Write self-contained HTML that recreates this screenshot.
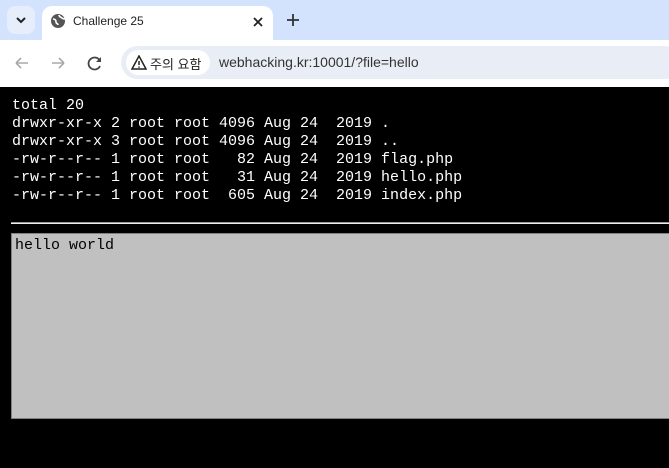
<!DOCTYPE html><html><head><style>
body{margin:0;width:669px;height:468px;overflow:hidden;font-family:"Liberation Sans","Noto Sans CJK KR",sans-serif;background:#000;position:relative}
.tabbar{position:absolute;left:0;top:0;width:669px;height:40px;background:#d3e3fd}
.dd{position:absolute;left:7px;top:6px;width:28px;height:28px;background:#e6eefc;border-radius:8px}
.tab{position:absolute;left:42px;top:6px;width:231px;height:34px;background:#fff;border-radius:10px 10px 0 0}
.tb{position:absolute;left:0;top:40px;width:669px;height:47px;background:#fff}
.addr{position:absolute;left:121px;top:46px;width:560px;height:33px;background:#e9eef6;border-radius:17px}
.chip{position:absolute;left:126px;top:50px;width:84px;height:25px;background:#fff;border-radius:13px}
pre{position:absolute;left:12px;top:97px;margin:0;color:#fff;font:15px/18px "Liberation Mono",monospace}
.hr{position:absolute;left:11px;top:222px;width:658px;height:1px;background:#9a9a9a;border-bottom:1px solid #eee}
.ta{position:absolute;left:11px;top:233px;width:670px;height:186px;background:#c0c0c0;border:1px solid #808080;box-sizing:border-box}
.ta span{position:absolute;left:3px;top:3px;font:15px/18px "Liberation Mono",monospace;color:#000}
</style></head><body>
<div class="tabbar"></div>
<div class="dd"><svg width="28" height="28"><path d="M10 12l4 4 4-4" stroke="#222" stroke-width="2" fill="none"/></svg></div>
<div class="tab">
<svg style="position:absolute;left:8px;top:7px" width="16" height="16"><circle cx="8" cy="8" r="7" fill="#555"/><path d="M3 6c2 0 3 1 3 3s2 1 2 3M9 2c0 2 2 2 3 3s2 1 3 1" stroke="#fff" stroke-width="1.6" fill="none"/></svg>
<span style="position:absolute;left:31px;top:8px;font-size:12px;color:#222">Challenge 25</span>
<svg style="position:absolute;left:210px;top:10px" width="12" height="12"><path d="M2 2l8 8M10 2l-8 8" stroke="#222" stroke-width="1.8"/></svg>
</div>
<svg style="position:absolute;left:286px;top:13px" width="14" height="14"><path d="M7 1v12M1 7h12" stroke="#333" stroke-width="1.8"/></svg>
<div class="tb"></div>
<svg style="position:absolute;left:14px;top:55px" width="90" height="16">
<path d="M2 8h12M2 8l5-5M2 8l5 5" stroke="#aaa" stroke-width="1.6" fill="none"/>
<path d="M38 8h12M50 8l-5-5M50 8l-5 5" stroke="#aaa" stroke-width="1.6" fill="none"/>
<path d="M86 6a6 6 0 1 0 0 5" stroke="#444" stroke-width="1.8" fill="none"/><path d="M87 2v5h-5z" fill="#444"/>
</svg>
<div class="addr"></div><div class="chip"></div>
<svg style="position:absolute;left:131px;top:55px" width="16" height="15"><path d="M8 1L15 14H1z" stroke="#222" stroke-width="1.5" fill="none"/><path d="M8 6v4M8 11.5v1.2" stroke="#222" stroke-width="1.5"/></svg>
<span style="position:absolute;left:150px;top:54px;font-size:13px;color:#222">주의 요함</span>
<span style="position:absolute;left:219px;top:54px;font-size:14px;color:#333">webhacking.kr:10001/?file=hello</span>
<pre>total 20
drwxr-xr-x 2 root root 4096 Aug 24  2019 .
drwxr-xr-x 3 root root 4096 Aug 24  2019 ..
-rw-r--r-- 1 root root   82 Aug 24  2019 flag.php
-rw-r--r-- 1 root root   31 Aug 24  2019 hello.php
-rw-r--r-- 1 root root  605 Aug 24  2019 index.php</pre>
<div class="hr"></div>
<div class="ta"><span>hello world</span></div>
</body></html>
